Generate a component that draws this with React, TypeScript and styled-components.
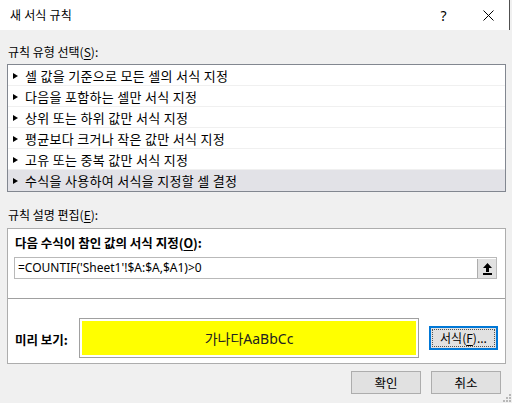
import React from 'react';
import styled, { createGlobalStyle } from 'styled-components';

const Global = createGlobalStyle`
  html, body {
    margin: 0;
    padding: 0;
    background: #f0f0f0;
  }
  body {
    font-family: "Noto Sans CJK KR", "Noto Sans", sans-serif;
    color: #000;
  }
`;

const Dialog = styled.div`
  position: relative;
  width: 512px;
  height: 403px;
  background: #f0f0f0;
  overflow: hidden;
`;

const TitleBar = styled.div`
  height: 30px;
  width: 510px;
  background: #fff;
  border-right: 1px solid #505050;
  display: flex;
  align-items: center;
  padding-left: 10px;
  box-sizing: border-box;
`;

const Title = styled.div`
  flex: 1;
  font-size: 12px;
  line-height: 16px;
  letter-spacing: 0.2px;
`;

const TitleButton = styled.div<{ $w: number }>`
  width: ${p => p.$w}px;
  height: 30px;
  display: flex;
  align-items: center;
  justify-content: center;
  font-family: "Noto Sans", sans-serif;
  font-size: 14px;
`;

const Main = styled.div`
  padding: 0 6px 0 7px;
  display: flex;
  flex-direction: column;
`;

const GroupLabel = styled.div<{ $top: number; $bottom: number }>`
  margin-top: ${p => p.$top}px;
  margin-bottom: ${p => p.$bottom}px;
  height: 18px;
  line-height: 18px;
  font-size: 12px;
  padding-left: 1px;
`;

const Key = styled.span`
  text-decoration: underline;
  text-underline-offset: 2px;
`;

const List = styled.div`
  height: 128px;
  box-sizing: border-box;
  border: 1px solid #828790;
  background: #fff;
  display: flex;
  flex-direction: column;
`;

const Row = styled.div<{ $selected?: boolean }>`
  height: 21px;
  box-sizing: border-box;
  display: flex;
  align-items: center;
  padding-left: 5px;
  font-size: 13px;
  letter-spacing: 0.3px;
  background: ${p => (p.$selected ? '#e2e2e7' : '#fff')};
  border-bottom: 1px solid ${p => (p.$selected ? '#e2e2e7' : '#f0f0f0')};
`;

const Arrow = styled.span`
  width: 0;
  height: 0;
  border-top: 3.5px solid transparent;
  border-bottom: 3.5px solid transparent;
  border-left: 5px solid #000;
  margin-right: 7px;
  margin-top: 2px;
`;

const RuleBox = styled.div`
  height: 136px;
  box-sizing: border-box;
  border: 1px solid #adadad;
  background: #fff;
  display: flex;
  flex-direction: column;
`;

const FormulaSection = styled.div`
  height: 71px;
  box-sizing: border-box;
  border-bottom: 1px solid #a0a0a0;
  padding: 5px 8px 0 6px;
`;

const BoldLabel = styled.div`
  height: 18px;
  line-height: 18px;
  font-size: 12.5px;
  font-weight: 700;
  padding-left: 1px;
`;

const Input = styled.div`
  margin-top: 5px;
  height: 22px;
  box-sizing: border-box;
  border: 1px solid #b9b9b9;
  background: #fff;
  display: flex;
  align-items: stretch;
`;

const InputText = styled.div`
  flex: 1;
  padding-left: 3px;
  font-family: "Noto Sans", sans-serif;
  font-size: 12px;
  line-height: 20px;
`;

const PickButton = styled.div`
  width: 19px;
  margin: 1px 0 0 0;
  box-sizing: border-box;
  background: #e1e1e1;
  border-left: 1px solid #adadad;
  display: flex;
  align-items: center;
  justify-content: center;
`;

const PreviewSection = styled.div`
  height: 64px;
  box-sizing: border-box;
  padding: 19px 0 0 7px;
`;

const PreviewRow = styled.div`
  display: flex;
  align-items: center;
  height: 40px;
`;

const PreviewLabel = styled(BoldLabel)`
  width: 64px;
  padding-left: 0;
  margin-top: 3px;
`;

const Swatch = styled.div`
  width: 340px;
  height: 40px;
  box-sizing: border-box;
  border: 1px solid #a0a0a0;
  padding: 2px;
  background: #fff;
`;

const SwatchFill = styled.div`
  height: 100%;
  background: #ffff00;
  display: flex;
  align-items: center;
  justify-content: center;
  font-size: 14px;
  color: #222;
  font-family: "Noto Sans", "Noto Sans CJK KR", sans-serif;
`;

const Button = styled.div<{ $focused?: boolean }>`
  width: ${p => (p.$focused ? 69 : 70)}px;
  height: ${p => (p.$focused ? 24 : 23)}px;
  box-sizing: border-box;
  border: 1px solid ${p => (p.$focused ? '#0078d7' : '#adadad')};
  background: #e1e1e1;
  display: flex;
  align-items: center;
  justify-content: center;
  font-size: 12.5px;
  position: relative;
  padding-bottom: 1px;
  ${p => p.$focused && `
    box-shadow: inset 0 0 0 1px #0078d7;
    &::after {
      content: '';
      position: absolute;
      inset: 2px;
      border: 1px dotted #555;
    }
  `}
`;

const FormatButton = styled(Button)`
  margin-left: 10px;
  font-size: 12px;
`;

const Footer = styled.div`
  margin-top: 7px;
  margin-right: 5px;
  display: flex;
  justify-content: flex-end;
  gap: 10px;
`;

const Grip = styled.svg`
  position: absolute;
  right: 1px;
  bottom: 1px;
`;

const rules = [
  '셀 값을 기준으로 모든 셀의 서식 지정',
  '다음을 포함하는 셀만 서식 지정',
  '상위 또는 하위 값만 서식 지정',
  '평균보다 크거나 작은 값만 서식 지정',
  '고유 또는 중복 값만 서식 지정',
  '수식을 사용하여 서식을 지정할 셀 결정',
];

export default function App() {
  return (
    <Dialog>
      <Global />
      <TitleBar>
        <Title>새 서식 규칙</Title>
        <TitleButton $w={47}>?</TitleButton>
        <TitleButton $w={42}>
          <svg width="11" height="11" viewBox="0 0 11 11">
            <path d="M0.5 0.5 L10.5 10.5 M10.5 0.5 L0.5 10.5" stroke="#000" strokeWidth="1" />
          </svg>
        </TitleButton>
      </TitleBar>
      <Main>
        <GroupLabel $top={13} $bottom={3}>
          규칙 유형 선택(<Key>S</Key>):
        </GroupLabel>
        <List>
          {rules.map((r, i) => (
            <Row key={r} $selected={i === rules.length - 1}>
              <Arrow />
              {r}
            </Row>
          ))}
        </List>
        <GroupLabel $top={14} $bottom={4}>
          규칙 설명 편집(<Key>E</Key>):
        </GroupLabel>
        <RuleBox>
          <FormulaSection>
            <BoldLabel>
              다음 수식이 참인 값의 서식 지정(<Key>O</Key>):
            </BoldLabel>
            <Input>
              <InputText>=COUNTIF('Sheet1'!$A:$A,$A1)&gt;0</InputText>
              <PickButton>
                <svg width="9" height="12" viewBox="0 0 9 12">
                  <path d="M4.5 0 L9 5 L6 5 L6 9 L3 9 L3 5 L0 5 Z" fill="#000" />
                  <rect x="0" y="10" width="9" height="2" fill="#000" />
                </svg>
              </PickButton>
            </Input>
          </FormulaSection>
          <PreviewSection>
            <PreviewRow>
              <PreviewLabel>미리 보기:</PreviewLabel>
              <Swatch>
                <SwatchFill>가나다AaBbCc</SwatchFill>
              </Swatch>
              <FormatButton $focused>
                서식(<Key>F</Key>)...
              </FormatButton>
            </PreviewRow>
          </PreviewSection>
        </RuleBox>
        <Footer>
          <Button>확인</Button>
          <Button>취소</Button>
        </Footer>
      </Main>
      <Grip width="10" height="10" viewBox="0 0 10 10">
        {[
          [8, 0], [8, 3], [5, 3], [8, 6], [5, 6], [2, 6],
        ].map(([x, y]) => (
          <rect key={`${x}-${y}`} x={x} y={y + 2} width="2" height="2" fill="#b8b8b8" />
        ))}
      </Grip>
    </Dialog>
  );
}
